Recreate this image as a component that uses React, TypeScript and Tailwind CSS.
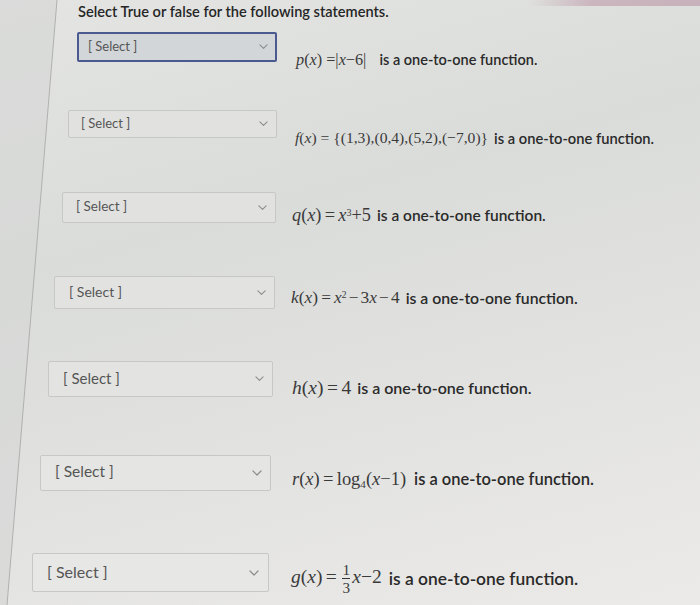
import React from 'react';

const lato = { fontFamily: 'Lato, "Noto Sans", sans-serif' };

type Row = {
  band: string;
  box: string;
  sel: string;
  chev: string;
  stmt: string;
  mathSize: string;
  gap: string;
  math: React.ReactNode;
};

const V = ({ children }: { children: React.ReactNode }) => <i className="italic">{children}</i>;
const Eq = () => <span className="mx-[0.18em]">=</span>;

const Fraction = () => (
  <span className="mx-[2px] inline-flex flex-col items-center align-middle text-[0.78em] leading-[1]">
    <span className="pb-[1px]">1</span>
    <span className="h-px w-[8px] bg-[#333]" />
    <span className="pt-[1px]">3</span>
  </span>
);

const rows: Row[] = [
  {
    band: 'h-[78px]',
    box: 'ml-[77px] w-[200px] h-[30px] border-2 border-[#4b5a8e] bg-[#d3d6d9]',
    sel: 'text-[13px] pl-[9px]',
    chev: 'w-[9px] mr-[7px]',
    stmt: 'ml-[19px] mt-[18px] text-[14.5px]',
    mathSize: 'text-[1.12em]',
    gap: 'ml-[13px]',
    math: (
      <>
        <V>p</V>(<V>x</V>) =|<V>x</V>−6|
      </>
    ),
  },
  {
    band: 'h-[82px]',
    box: 'ml-[68px] w-[209px] h-[28px] border border-[#c6c7c6] bg-[#e1e2e0]',
    sel: 'text-[13px] pl-[12px]',
    chev: 'w-[9px] mr-[8px]',
    stmt: 'ml-[18px] mt-[18px] text-[14.7px]',
    mathSize: 'text-[1.06em]',
    gap: 'ml-[6px]',
    math: (
      <>
        <V>f</V>(<V>x</V>) = {'{'}(1,3),(0,4),(5,2),(−7,0){'}'}
      </>
    ),
  },
  {
    band: 'h-[84px]',
    box: 'ml-[62px] w-[214px] h-[31px] border border-[#c6c7c6] bg-[#e1e2e0]',
    sel: 'text-[13.5px] pl-[13px]',
    chev: 'w-[9px] mr-[8px]',
    stmt: 'ml-[16px] mt-[13px] text-[15.5px]',
    mathSize: 'text-[1.18em]',
    gap: 'ml-[6px]',
    math: (
      <>
        <V>q</V>(<V>x</V>)<Eq /><V>x</V>
        <sup className="text-[0.55em]">3</sup>+5
      </>
    ),
  },
  {
    band: 'h-[85px]',
    box: 'ml-[54px] w-[221px] h-[33px] border border-[#c6c7c6] bg-[#e2e3e1]',
    sel: 'text-[14px] pl-[14px]',
    chev: 'w-[9px] mr-[8px]',
    stmt: 'ml-[16px] mt-[12px] text-[15.8px]',
    mathSize: 'text-[1.1em]',
    gap: 'ml-[6px]',
    math: (
      <>
        <V>k</V>(<V>x</V>)<Eq /><V>x</V>
        <sup className="text-[0.55em]">2</sup>
        <span className="mx-[0.12em]">−</span>3<V>x</V>
        <span className="mx-[0.12em]">−</span>4
      </>
    ),
  },
  {
    band: 'h-[94px]',
    box: 'ml-[48px] w-[225px] h-[36px] border border-[#c6c7c6] bg-[#e3e4e2]',
    sel: 'text-[15px] pl-[14px]',
    chev: 'w-[9px] mr-[8px]',
    stmt: 'ml-[19px] mt-[17px] text-[16px]',
    mathSize: 'text-[1.22em]',
    gap: 'ml-[6px]',
    math: (
      <>
        <V>h</V>(<V>x</V>)<Eq />4
      </>
    ),
  },
  {
    band: 'h-[98px]',
    box: 'ml-[40px] w-[231px] h-[36px] border border-[#c6c7c6] bg-[#e5e5e3]',
    sel: 'text-[15.5px] pl-[14px]',
    chev: 'w-[10px] mr-[8px]',
    stmt: 'ml-[21px] mt-[14px] text-[16.5px]',
    mathSize: 'text-[1.12em]',
    gap: 'ml-[8px]',
    math: (
      <>
        <V>r</V>(<V>x</V>)<Eq />log<sub className="text-[0.6em]">4</sub>(<V>x</V>−1)
      </>
    ),
  },
  {
    band: 'h-[52px]',
    box: 'ml-[32px] w-[237px] h-[39px] border border-[#c6c7c6] bg-[#e7e7e5]',
    sel: 'text-[16px] pl-[14px]',
    chev: 'w-[10px] mr-[9px]',
    stmt: 'ml-[22px] mt-[9px] text-[17.4px]',
    mathSize: 'text-[1.12em]',
    gap: 'ml-[7px]',
    math: (
      <>
        <V>g</V>(<V>x</V>)<Eq /><Fraction /><V>x</V>−2
      </>
    ),
  },
];

const Chevron = ({ className }: { className: string }) => (
  <svg viewBox="0 0 10 6" className={`${className} shrink-0`} fill="none">
    <path d="M1 1l4 4 4-4" stroke="#8a8c8e" strokeWidth="1.2" strokeLinecap="round" strokeLinejoin="round" />
  </svg>
);

export default function App() {
  return (
    <div
      className="relative h-[605px] w-[700px] overflow-hidden bg-[linear-gradient(165deg,#e4e5e3_0%,#dadcda_35%,#e3e3e1_70%,#ebeae8_100%)] text-[#2b2b2b]"
      style={lato}
    >
      {/* page edge seen in the photo */}
      <svg className="pointer-events-none absolute inset-0" width="700" height="605" viewBox="0 0 700 605">
        <polygon points="0,0 57,0 7,605 0,605" fill="#d6d7d5" opacity="0.7" />
        <line x1="57" y1="0" x2="7" y2="605" stroke="#b0b1af" strokeWidth="1" />
      </svg>

      <div className="relative flex h-[32px] items-start">
        <h1 className="pl-[78px] pt-[4px] text-[14.6px] font-semibold leading-[16px] text-[#262626]">
          Select True or false for the following statements.
        </h1>
        <div className="h-[6px] flex-1 bg-[linear-gradient(90deg,transparent_0%,transparent_45%,#cbb6be_65%,#c7b2bb_100%)]" />
      </div>

      <div className="relative flex flex-col">
        {rows.map((r, i) => (
          <div key={i} className={`flex items-start ${r.band}`}>
            <div className={`flex shrink-0 items-center justify-between rounded-[2px] ${r.box}`}>
              <span className={`pb-[2px] leading-none text-[#555] ${r.sel}`}>[ Select ]</span>
              <Chevron className={r.chev} />
            </div>
            <div className={`flex items-center whitespace-nowrap leading-[20px] ${r.stmt}`}>
              <span
                className={`text-[#3a3a3a] ${r.mathSize}`}
                style={{ fontFamily: '"Liberation Serif", "Times New Roman", serif' }}
              >
                {r.math}
              </span>
              <span className={`font-semibold text-[#2a2a2a] ${r.gap}`}>is a one-to-one function.</span>
            </div>
          </div>
        ))}
      </div>
    </div>
  );
}
